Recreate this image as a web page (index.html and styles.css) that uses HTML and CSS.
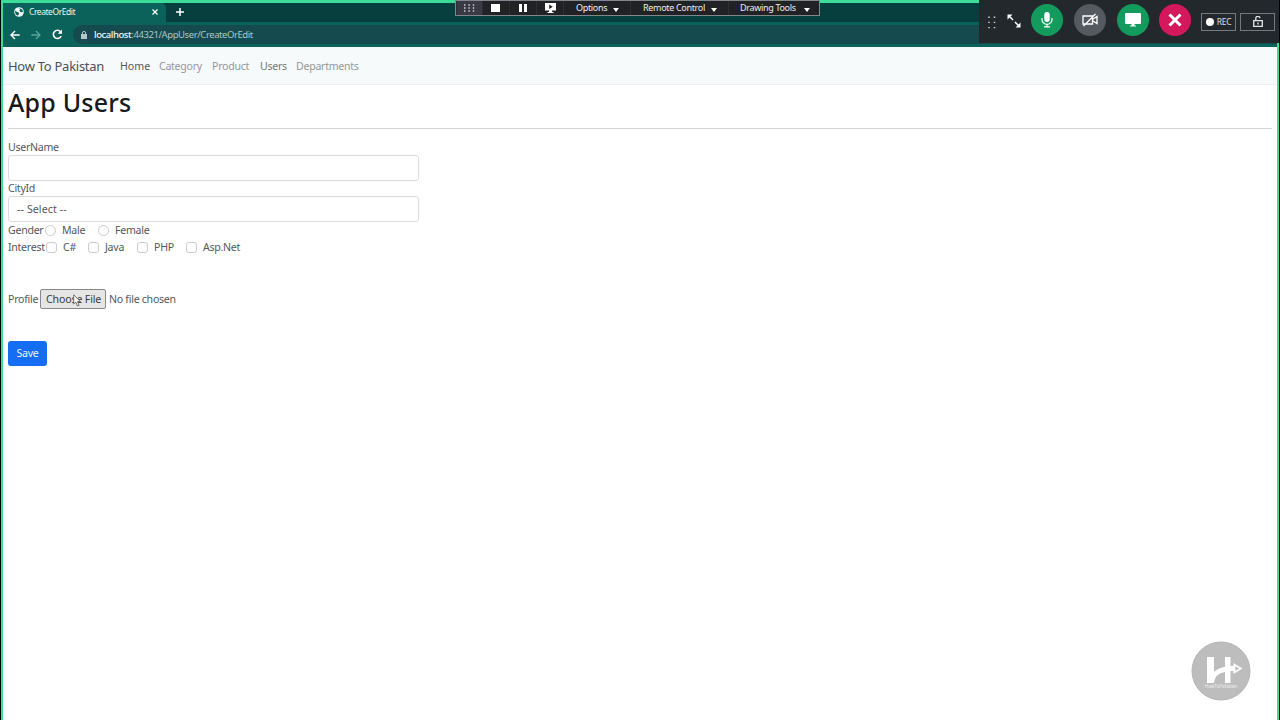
FILE: index.html
```html
<!DOCTYPE html>
<html lang="en">
<head>
  <meta charset="UTF-8" />
  <meta name="viewport" content="width=device-width, initial-scale=1.0"/>
  <title>CreateOrEdit</title>
  <link rel="stylesheet" href="styles.css">
</head>
<body>
<div class="screen">
  <div class="browser">
    <div class="tabs">
      <div class="tab">
        <svg class="globe" width="10" height="10" viewBox="0 0 10 10"><circle cx="5" cy="5" r="4.8" fill="#eefafa"/><path d="M1 3.5 L3 5 L4.5 5.2 L5 7 L3.8 8.8 L1.5 7.3 Z M5 1 L6.2 2.7 L5.3 3.7 L7 5.2 L9 5 L8.2 2.4 Z" fill="#0a625a"/></svg>
        <span class="tab-title">CreateOrEdit</span>
        <svg class="tab-close" width="6" height="6" viewBox="0 0 6 6"><path d="M.5 .5 L5.5 5.5 M5.5 .5 L.5 5.5" stroke="#fff" stroke-width="1.3"/></svg>
      </div>
      <svg class="tab-new" width="8" height="8" viewBox="0 0 8 8"><path d="M4 0 V8 M0 4 H8" stroke="#fff" stroke-width="1.5"/></svg>
    </div>
    <div class="toolbar">
      <svg width="10" height="10" viewBox="0 0 10 10" fill="none" stroke="#fff" stroke-width="1.4"><path d="M9.7 5 H1 M5 1 L1 5 L5 9"/></svg>
      <svg class="forward" width="10" height="10" viewBox="0 0 10 10" fill="none" stroke="#5fa49a" stroke-width="1.3"><path d="M.3 5 H9 M5 1 L9 5 L5 9"/></svg>
      <svg class="reload" width="11" height="11" viewBox="0 0 11 11"><path d="M9.2 7 A4.1 4.1 0 1 1 8.6 2.8" fill="none" stroke="#fff" stroke-width="1.6"/><path d="M10 .6 V4.8 H5.8 Z" fill="#fff"/></svg>
      <div class="address">
        <svg width="6" height="8" viewBox="0 0 6 8"><path d="M0 3 H6 V8 H0 Z" fill="#b6c6ca"/><path d="M1.4 3.3 V2 A1.6 1.6 0 0 1 4.6 2 V3.3" fill="none" stroke="#b6c6ca"/></svg>
        <span class="url"><b>localhost</b>:44321/AppUser/CreateOrEdit</span>
      </div>
    </div>
  </div>

  <nav class="navbar">
    <a class="brand">How To Pakistan</a>
    <a class="nav-home">Home</a>
    <a class="nav-category">Category</a>
    <a class="nav-product">Product</a>
    <a class="nav-users">Users</a>
    <a class="nav-departments">Departments</a>
  </nav>

  <main>
    <h1><span>App Users</span></h1>
    <hr>
    <form>
      <label class="field-label">UserName</label>
      <div class="control"></div>
      <label class="field-label city">CityId</label>
      <div class="control select">-- Select --</div>
      <div class="options gender">
        <span class="caption">Gender</span>
        <i class="radio"></i><span class="male">Male</span>
        <i class="radio"></i><span class="female">Female</span>
      </div>
      <div class="options">
        <span class="caption interest">Interest</span>
        <i class="check"></i><span class="csharp">C#</span>
        <i class="check"></i><span class="java">Java</span>
        <i class="check"></i><span class="php">PHP</span>
        <i class="check"></i><span class="asp">Asp.Net</span>
      </div>
      <div class="profile">
        <span class="profile-label">Profile</span>
        <span class="file-button">Choose File
          <svg class="cursor" width="8" height="13" viewBox="0 0 8 13"><path d="M.7 .8 V10 L2.8 8.1 L4.5 12 L6.1 11.3 L4.5 7.5 H7.3 Z" fill="#fff" stroke="#555" stroke-width=".8"/></svg>
        </span>
        <span class="no-file">No file chosen</span>
      </div>
      <div class="save">Save</div>
    </form>
  </main>

  <!-- screen sharing bar -->
  <div class="share-bar">
    <div class="cell grip"><svg width="12" height="8" viewBox="0 0 12 8"><path d="M1 1 H12 M1 4 H12 M1 7 H12" stroke="#d5d6dc" stroke-width="1.4" stroke-dasharray="1.4 3"/></svg></div>
    <div class="cell"><svg width="9" height="8" viewBox="0 0 9 8"><rect width="9" height="8" fill="#fff"/></svg></div>
    <div class="cell"><svg width="8" height="8" viewBox="0 0 8 8"><path d="M0 0 H3 V8 H0 Z M5 0 H8 V8 H5 Z" fill="#fff"/></svg></div>
    <div class="cell"><svg width="11" height="10" viewBox="0 0 11 10"><path d="M0 0 H11 V7.5 H7 V9 H8.5 V10 H2.5 V9 H4 V7.5 H0 Z" fill="#fff"/><path d="M4.2 1.5 L7.8 3.7 L4.2 6 Z" fill="#202225"/></svg></div>
    <div class="cell menu options-menu"><span>Options</span><i class="caret"></i></div>
    <div class="cell menu remote-menu"><span>Remote Control</span><i class="caret"></i></div>
    <div class="cell menu drawing-menu"><span>Drawing Tools</span><i class="caret"></i></div>
  </div>

  <!-- meeting controls -->
  <div class="call-bar">
    <svg class="dots" width="8" height="13" viewBox="0 0 8 13"><path d="M1 .5 V13 M6.5 .5 V13" stroke="#d0d3d5" stroke-width="1.5" stroke-dasharray="1.4 3.8"/></svg>
    <svg class="expand" width="14" height="14" viewBox="0 0 14 14"><path d="M2.5 2.5 L11.5 11.5" stroke="#fff" stroke-width="1.5" stroke-dasharray="5 2.7"/><path d="M.5 .5 H5.5 L.5 5.5 Z M13.5 13.5 H8.5 L13.5 8.5 Z" fill="#fff"/></svg>
    <div class="round green"><svg width="12" height="16" viewBox="0 0 12 16"><rect x="3.3" y="0" width="5.4" height="10" rx="2.7" fill="#fff"/><path d="M1 6 V7.4 A5 5 0 0 0 11 7.4 V6 M6 12.4 V14.5 M3 14.8 H9" fill="none" stroke="#fff" stroke-width="1.2"/></svg></div>
    <div class="round gray"><svg width="16" height="14" viewBox="0 0 16 14" fill="none" stroke="#fff" stroke-width="1.3"><path d="M1 3 H10.5 V11 H1 Z M10.5 6.5 L15 3.5 V10.5 L10.5 7.8 M1.5 13 L13.5 1"/></svg></div>
    <div class="round green"><svg width="16" height="14" viewBox="0 0 16 14"><path d="M1 0 H15 Q16 0 16 1 V10 Q16 11 15 11 H9.5 V12.5 H11 V13.5 H5 V12.5 H6.5 V11 H1 Q0 11 0 10 V1 Q0 0 1 0" fill="#fff"/></svg></div>
    <div class="round red"><svg width="14" height="14" viewBox="0 0 14 14"><path d="M1.5 1.5 L12.5 12.5 M12.5 1.5 L1.5 12.5" stroke="#fff" stroke-width="3"/></svg></div>
    <div class="box rec"><i></i><span>REC</span></div>
    <div class="box"><svg width="10" height="11" viewBox="0 0 10 11" fill="none" stroke="#e2e5e7" stroke-width="1.3"><path d="M.7 4.6 H9.3 V10.3 H.7 Z M2.8 4.6 V2.8 A2.1 2.2 0 0 1 7 2.2 M5 6.5 V8.5"/></svg></div>
  </div>

  <div class="watermark">
    <svg width="60" height="60" viewBox="0 0 60 60"><circle cx="30" cy="30" r="29" fill="#bdbdbd" stroke="#b4b4b4" stroke-width="1"/><path d="M16 16 H23 V31 Q28 26.5 34 26 V16 H39.5 V25 L42.5 24.8 V22 L51.5 27.5 L42.5 33 V30 H39.5 V42 H34 V31 Q24 32.5 23 42 H16 Z" fill="#fff"/><path d="M44.3 25.2 L48.3 27.5 L44.3 29.8 Z" fill="#bdbdbd"/></svg>
    <span>HowToPakistan</span>
  </div>
</div>
</body>
</html>
```

FILE: styles.css
```css
* { box-sizing: border-box; }
body { margin: 0; background: #fff; font-family: "Noto Sans", "Open Sans", sans-serif; font-size: 10.6px; letter-spacing: -.28px; color: #53575b; }
svg { display: block; flex: none; }
.screen { position: relative; width: 1280px; height: 720px; overflow: hidden; border: solid #000; border-width: 0 1px; background: #fff; box-shadow: inset 2px 0 #3cdb98, inset -2px 0 #3cdb98; padding: 0 2px; }

.browser { height: 47px; border-top: 3px solid #3cdb98; background: #0a625a; }
.tabs { display: flex; align-items: center; height: 20px; background: #073f3e; border-bottom: 1px solid #0a625a; }
.tab { display: flex; align-items: center; width: 163px; height: 20px; padding: 0 8px 2px 11px; background: #0a625a; border-radius: 0 5px 0 0; }
.tab-title { margin-left: 5px; font-size: 8.5px; color: #e7f5f3; white-space: nowrap; letter-spacing: -.45px; }
.tab-close { margin-left: auto; }
.tab-new { margin: 0 0 2px 10px; }
.toolbar { display: flex; align-items: center; height: 24px; padding: 0 0 1px 7px; }
.forward { margin-left: 11px; }
.reload { margin-left: 11px; }
.address { display: flex; flex: 1; align-items: center; height: 19px; margin-left: 10px; padding-left: 8px; background: #154b4f; border-radius: 10px 0 0 10px; }
.url { margin-left: 7px; color: #aec5c6; font-size: 9.5px; white-space: nowrap; letter-spacing: -.42px; }
.url b { color: #f0fafa; font-weight: 500; }

.navbar { display: flex; align-items: center; height: 38px; padding-left: 5px; background: #f7fafa; border-bottom: 1px solid #edf0f1; white-space: nowrap; }
.navbar a { color: #94989b; }
.navbar .brand { width: 112px; font-size: 13px; color: #4c5054; letter-spacing: -.27px; }
.navbar .nav-home { width: 39px; color: #53585b; letter-spacing: 0; }
.nav-category { width: 53px; }
.nav-product { width: 48px; }
.navbar .nav-users { width: 36px; color: #74797c; }

main { padding: 0 5px; }
h1 { height: 43px; margin: 0; font-size: 25px; line-height: 35px; font-weight: 500; letter-spacing: .2px; color: #17191b; }
hr { height: 1px; margin: 0; border: 0; background: #d2d5d5; }
form { padding-top: 11px; }
.field-label { display: block; height: 15px; line-height: 15px; }
.control { width: 411px; height: 26px; border: 1px solid #d9dddf; border-radius: 3px; }
.city { height: 15px; }
.select { padding-left: 8px; line-height: 25px; letter-spacing: .1px; }
.options { display: flex; align-items: center; height: 17px; }
.options span { position: relative; top: -.5px; }
.caption { width: 37px; }
.interest { width: 38px; }
.radio, .check { flex: none; width: 11px; height: 11px; border: 1px solid #c9cccf; background: #fff; }
.radio { border-radius: 50%; }
.check { border-radius: 3px; }
.options i + span { margin-left: 6px; }
.male { width: 36px; }
.csharp { width: 25px; }
.java { width: 32px; }
.php { width: 32px; }
.profile { display: flex; align-items: center; height: 21px; margin-top: 32px; }
.profile-label { width: 32px; }
.file-button { position: relative; width: 66px; height: 20px; padding-left: 5px; line-height: 18px; letter-spacing: -.15px; border: 1px solid #888; border-radius: 2px; background: #e5e5e5; color: #3b3b3b; white-space: nowrap; }
.cursor { position: absolute; left: 32px; top: 4px; }
.no-file { margin-left: 3px; white-space: nowrap; }
.save { width: 39px; height: 25px; margin-top: 32px; line-height: 25px; text-align: center; background: #156df4; border-radius: 3px; color: #e9f3ff; }

.share-bar { position: absolute; left: 454px; top: 0; display: flex; width: 365px; height: 16px; border: 1px solid #81878a; background: #202225; color: #eceef0; font-size: 9px; }
.cell { display: flex; align-items: center; justify-content: center; width: 27px; border-left: 1px solid #2c2f33; white-space: nowrap; }
.cell:nth-child(2) { padding-right: 2px; }
.grip { width: 26px; padding-right: 2px; background: #393a45; }
.menu { justify-content: space-between; letter-spacing: -.32px; }
.menu span { margin-top: -2px; }
.options-menu { width: 67px; padding: 0 11px 0 12px; }
.remote-menu { width: 98px; padding: 0 11px 0 12px; }
.drawing-menu { width: 91px; padding: 0 9px 0 11px; }
.caret { border: solid transparent; border-width: 4px 3.5px 0; border-top-color: #fff; margin-top: 3px; }

.call-bar { position: absolute; left: 978px; top: 0; display: flex; align-items: center; width: 300px; height: 43px; padding: 0 0 3px 9px; background: #23282c; }
.dots { margin-top: 4px; }
.expand { margin: 2px 10px 0 11px; }
.round { display: flex; align-items: center; justify-content: center; flex: none; width: 32px; height: 32px; margin-right: 11px; border-radius: 50%; }
.green { background: #139b5e; }
.gray { background: #555a60; }
.round.red { margin-right: 10px; margin-left: -1px; background: #d5175b; }
.box { display: flex; align-items: center; justify-content: center; flex: none; width: 35px; height: 18px; margin: 3px 4px 0 0; border: 1px solid #747b80; }
.rec { font-size: 8.5px; color: #dde1e3; gap: 3px; }
.rec i { width: 8px; height: 8px; border-radius: 50%; background: #fff; }

.watermark { position: absolute; left: 1190px; top: 641px; width: 60px; height: 60px; }
.watermark span { position: absolute; left: 0; top: 42px; width: 60px; text-align: center; font-size: 4.5px; line-height: 7px; letter-spacing: 0; color: #eee; }
```
